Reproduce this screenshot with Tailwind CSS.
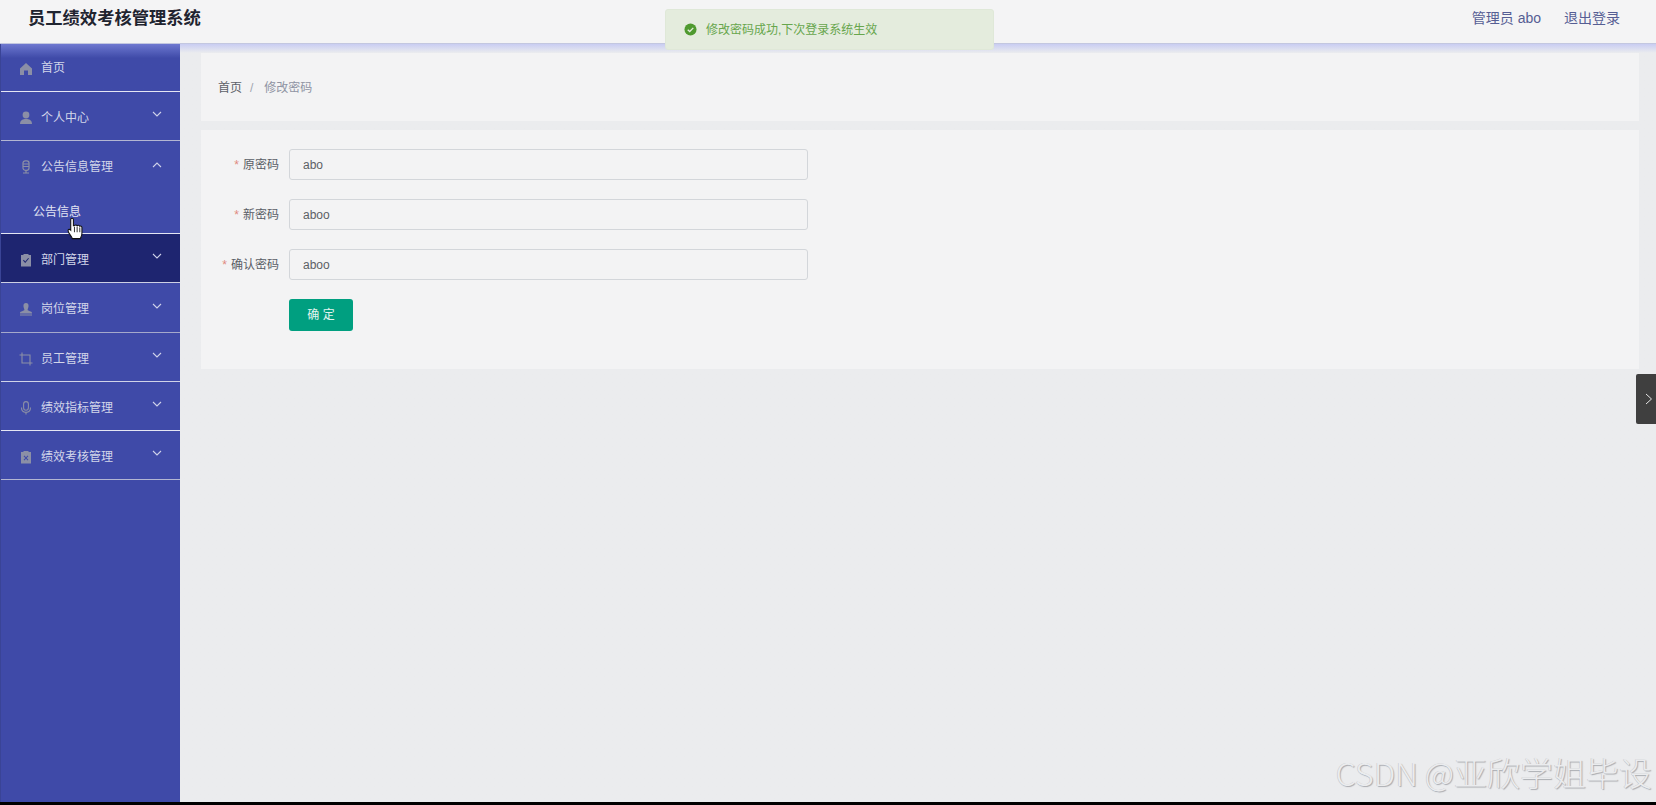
<!DOCTYPE html>
<html lang="zh-CN">
<head>
    <meta charset="utf-8">
    <script src="https://cdn.jsdelivr.net/npm/@tailwindcss/browser@4"></script>
    <title>员工绩效考核管理系统</title>
</head>
<body class="bg-[#ebecee] font-['Liberation_Sans','Noto_Sans_CJK_SC',sans-serif]">
<div class="relative w-[1656px] h-[805px] overflow-hidden flex flex-col">

    <!-- header -->
    <header class="h-[44px] shrink-0 flex items-center justify-between bg-[#f4f4f5] border-b border-[#c3c7e0] pl-[28px] pr-[36px]">
        <h1 class="text-[17.3px] font-bold text-[#1f2430] relative top-[-3px]">员工绩效考核管理系统</h1>
        <div class="flex gap-[23px] text-[14px] text-[#565e94] relative top-[-3px]">
            <span>管理员 abo</span>
            <span>退出登录</span>
        </div>
    </header>

    <div class="flex-1 flex min-h-0">
        <!-- sidebar -->
        <aside class="w-[180px] shrink-0 bg-[#3f4aa8] border-l border-[#3a4496] text-[12px] text-[#d3d6ea]">
            <div class="h-[48px] flex items-center pl-[18px] pt-[3px] border-b border-[#e4e6f4] bg-gradient-to-b from-[#6e78d0] to-[#3f4aa8] to-[30%]">
                <svg class="w-[14px] h-[14px] mr-[8px] text-[#8b8fa6]" viewBox="0 0 14 14" fill="currentColor"><path d="M7 1 L13 6.5 L13 13 L9 13 L9 8.5 L5 8.5 L5 13 L1 13 L1 6.5 Z"/></svg>
                <span class="relative top-[-1px]">首页</span>
            </div>

            <div class="h-[49px] flex items-center pl-[18px] pr-[18px] pt-[4px] border-b border-[#b3b6d2]">
                <svg class="w-[14px] h-[14px] mr-[8px] text-[#8b8fa6]" viewBox="0 0 14 14" fill="currentColor"><circle cx="7" cy="4" r="3.4"/><path d="M1 13 C1 9 4 8 7 8 C10 8 13 9 13 13 Z"/></svg>
                <span>个人中心</span>
                <svg class="ml-auto w-[10px] h-[10px] relative top-[-4px]" viewBox="0 0 10 10" fill="none" stroke="#cfd2ea" stroke-width="1.1"><path d="M1 3 L5 7 L9 3"/></svg>
            </div>

            <div class="h-[93px] border-b border-[#e4e6f4]">
                <div class="h-[49px] flex items-center pl-[18px] pr-[18px] pt-[2px]">
                    <svg class="w-[14px] h-[14px] mr-[8px] text-[#8b8fa6]" viewBox="0 0 14 14" fill="none" stroke="currentColor" stroke-width="1.2"><rect x="4" y="0.8" width="6" height="9.5" rx="2.2"/><path d="M4 4 H10 M4 6.5 H10 M7 10.5 V12.5 M4 13 H10"/></svg>
                    <span>公告信息管理</span>
                    <svg class="ml-auto w-[10px] h-[10px] relative top-[-2px]" viewBox="0 0 10 10" fill="none" stroke="#cfd2ea" stroke-width="1.1"><path d="M1 7 L5 3 L9 7"/></svg>
                </div>
                <div class="pl-[32px] text-[#e3e5f3] pt-[13px]">公告信息</div>
            </div>

            <div class="h-[49px] flex items-center pl-[18px] pr-[18px] pt-[4px] border-b border-[#cdd0e4] bg-[#1e2570]">
                <svg class="w-[14px] h-[14px] mr-[8px] text-[#8b8fa6]" viewBox="0 0 14 14" fill="currentColor"><path fill-rule="evenodd" d="M2 2 H4.5 V1 H9.5 V2 H12 V13.5 H2 Z M4 7.5 L6.2 10 L10 5.6 L9.2 5 L6.2 8.4 L4.8 6.8 Z"/></svg>
                <span>部门管理</span>
                <svg class="ml-auto w-[10px] h-[10px] relative top-[-4px]" viewBox="0 0 10 10" fill="none" stroke="#cfd2ea" stroke-width="1.1"><path d="M1 3 L5 7 L9 3"/></svg>
            </div>

            <div class="h-[50px] flex items-center pl-[18px] pr-[18px] pt-[2px] border-b border-[#a5a9cb]">
                <svg class="w-[14px] h-[14px] mr-[8px] text-[#8b8fa6]" viewBox="0 0 14 14" fill="currentColor"><path d="M7 1 C9 1 9.8 2.5 9.5 4.5 C9.3 6 8.6 7 8.6 8 C8.6 9 13 9 13 11 L13 11.6 L1 11.6 L1 11 C1 9 5.4 9 5.4 8 C5.4 7 4.7 6 4.5 4.5 C4.2 2.5 5 1 7 1 Z M1 12.4 H13 V13.4 H1 Z"/></svg>
                <span>岗位管理</span>
                <svg class="ml-auto w-[10px] h-[10px] relative top-[-3px]" viewBox="0 0 10 10" fill="none" stroke="#cfd2ea" stroke-width="1.1"><path d="M1 3 L5 7 L9 3"/></svg>
            </div>

            <div class="h-[49px] flex items-center pl-[18px] pr-[18px] pt-[3px] border-b border-[#d0d3e8]">
                <svg class="w-[14px] h-[14px] mr-[8px] text-[#8b8fa6]" viewBox="0 0 14 14" fill="none" stroke="currentColor" stroke-width="1.1"><path d="M3 0.5 V11 H13.5 M0.5 3 H11 V13.5"/></svg>
                <span>员工管理</span>
                <svg class="ml-auto w-[10px] h-[10px] relative top-[-4px]" viewBox="0 0 10 10" fill="none" stroke="#cfd2ea" stroke-width="1.1"><path d="M1 3 L5 7 L9 3"/></svg>
            </div>

            <div class="h-[49px] flex items-center pl-[18px] pr-[18px] pt-[4px] border-b border-[#e4e6f4]">
                <svg class="w-[14px] h-[14px] mr-[8px] text-[#8b8fa6]" viewBox="0 0 14 14" fill="none" stroke="currentColor" stroke-width="1.1"><rect x="4.6" y="0.6" width="4.8" height="8.6" rx="2.4"/><path d="M2.5 6.5 C2.5 13 11.5 13 11.5 6.5 M7 11 V13.5"/></svg>
                <span>绩效指标管理</span>
                <svg class="ml-auto w-[10px] h-[10px] relative top-[-4px]" viewBox="0 0 10 10" fill="none" stroke="#cfd2ea" stroke-width="1.1"><path d="M1 3 L5 7 L9 3"/></svg>
            </div>

            <div class="h-[49px] flex items-center pl-[18px] pr-[18px] pt-[4px] border-b border-[#b3b6d2]">
                <svg class="w-[14px] h-[14px] mr-[8px] text-[#8b8fa6]" viewBox="0 0 14 14" fill="currentColor"><path fill-rule="evenodd" d="M2 2 H4.5 V1 H9.5 V2 H12 V13.5 H2 Z M4.6 6.2 L6.3 8 L4.6 9.8 L5.4 10.6 L7 8.8 L8.6 10.6 L9.4 9.8 L7.7 8 L9.4 6.2 L8.6 5.4 L7 7.2 L5.4 5.4 Z"/></svg>
                <span>绩效考核管理</span>
                <svg class="ml-auto w-[10px] h-[10px] relative top-[-4px]" viewBox="0 0 10 10" fill="none" stroke="#cfd2ea" stroke-width="1.1"><path d="M1 3 L5 7 L9 3"/></svg>
            </div>
        </aside>

        <!-- main -->
        <main class="flex-1 min-w-0 bg-gradient-to-b from-[#c9cdf2] to-[#ebecee] to-[9px] bg-no-repeat pt-[9px] pl-[21px] pr-[17px]">
            <div class="h-[68px] bg-[#f3f3f4] flex items-center pl-[17px] pt-[1px] text-[12px] mb-[9px]">
                <span class="text-[#5c6068]">首页</span>
                <span class="ml-[8px] mr-[11px] text-[#a0a5b0]">/</span>
                <span class="text-[#8f94a3]">修改密码</span>
            </div>

            <form class="h-[239px] bg-[#f3f3f4] pt-[19px] text-[12px]">
                <div class="flex items-center h-[31px] mb-[19px]">
                    <label class="w-[78px] text-right text-[#5a5d66]"><span class="text-[#e08a80] mr-[4px]">*</span>原密码</label>
                    <input class="ml-[10px] w-[519px] h-[31px] px-[13px] bg-[#f3f3f4] border border-[#d3d6da] rounded-[3px] text-[12px] text-[#5c5f66]" value="abo">
                </div>
                <div class="flex items-center h-[31px] mb-[19px]">
                    <label class="w-[78px] text-right text-[#5a5d66]"><span class="text-[#e08a80] mr-[4px]">*</span>新密码</label>
                    <input class="ml-[10px] w-[519px] h-[31px] px-[13px] bg-[#f3f3f4] border border-[#d3d6da] rounded-[3px] text-[12px] text-[#5c5f66]" value="aboo">
                </div>
                <div class="flex items-center h-[31px] mb-[19px]">
                    <label class="w-[78px] text-right text-[#5a5d66]"><span class="text-[#e08a80] mr-[4px]">*</span>确认密码</label>
                    <input class="ml-[10px] w-[519px] h-[31px] px-[13px] bg-[#f3f3f4] border border-[#d3d6da] rounded-[3px] text-[12px] text-[#5c5f66]" value="aboo">
                </div>
                <button type="button" class="ml-[88px] block w-[64px] h-[32px] bg-[#009f80] rounded-[3px] text-[12px] text-[#e4f5f0]">确 定</button>
            </form>
        </main>
    </div>

    <div class="h-[3px] shrink-0 bg-black"></div>

    <!-- toast -->
    <div class="absolute left-[665px] top-[9px] w-[329px] h-[41px] flex items-center pl-[18px] bg-[#e4ecdd] border border-[#dfe8d8] rounded-[3px] text-[12px] text-[#67a64c]">
        <svg class="w-[13px] h-[13px] mr-[9px]" viewBox="0 0 14 14"><circle cx="7" cy="7" r="6.5" fill="#4f9a2f"/><path d="M4 7.2 L6.2 9.2 L10 5.2" fill="none" stroke="#e4ecdd" stroke-width="1.4"/></svg>
        <span>修改密码成功,下次登录系统生效</span>
    </div>

    <!-- right drawer toggle -->
    <div class="absolute right-0 top-[374px] w-[20px] h-[50px] bg-[#3f3f3f] rounded-l-[2px] flex items-center justify-end pr-[3px]">
        <svg class="w-[8px] h-[12px]" viewBox="0 0 8 12" fill="none" stroke="#e5e5e5" stroke-width="1"><path d="M1 1 L6.5 6 L1 11"/></svg>
    </div>

    <!-- hand cursor -->
    <svg class="absolute left-[67px] top-[217px] w-[16px] h-[23px]" viewBox="0 0 15 21">
        <path d="M3.5 2 C3.5 0.6 6 0.6 6 2 L6 8 L7 8 C7.5 7 9 7 9.5 8 C10 7.2 11.5 7.2 12 8.4 C12.6 8 14 8.4 14 9.6 L14 15 C14 17.5 12.8 19 12.5 20 L5 20 C4.5 18 1 14.5 1 12.5 C1 11 2.6 11 3.5 12 Z" fill="#fff" stroke="#111" stroke-width="1"/>
        <path d="M7 9 V14 M9.5 9 V14 M12 9.5 V14" stroke="#111" stroke-width="0.8"/>
    </svg>

    <!-- watermark -->
    <div class="absolute right-[4px] top-[749px] text-[33px] leading-[46px] font-light whitespace-nowrap text-[#ebecee] [text-shadow:1px_1px_1px_#a9abb0,-0.5px_-0.5px_0_#c6c7cb] font-['Noto_Sans_CJK_SC',sans-serif]"><span class="text-[32px]">CSDN @</span>亚欣学姐毕设</div>
</div>
</body>
</html>
